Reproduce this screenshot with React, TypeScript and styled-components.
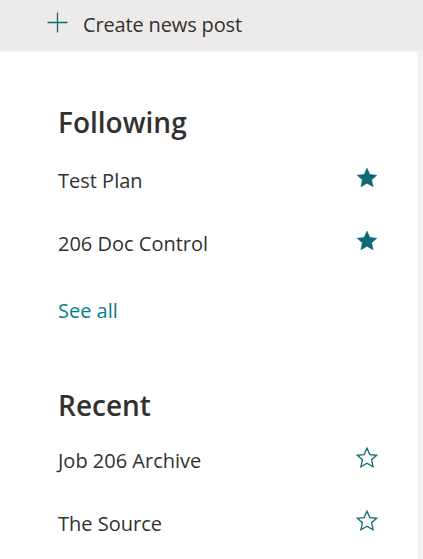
import styled, { createGlobalStyle } from 'styled-components';

const GlobalStyle = createGlobalStyle`
  html, body {
    margin: 0;
    padding: 0;
    background: #ffffff;
  }
  body {
    font-family: "Open Sans", "Noto Sans", sans-serif;
    color: #323130;
  }
`;

type Site = { name: string; followed: boolean };

const following: Site[] = [
  { name: 'Test Plan', followed: true },
  { name: '206 Doc Control', followed: true },
];

const recent: Site[] = [
  { name: 'Job 206 Archive', followed: false },
  { name: 'The Source', followed: false },
];

function Star({ filled }: { filled: boolean }) {
  return (
    <svg width="24" height="24" viewBox="0 0 24 24">
      <path
        d="M12 2.2l2.85 6.35 6.9.7-5.17 4.6 1.5 6.85L12 17.2l-6.08 3.5 1.5-6.85L2.25 9.25l6.9-.7z"
        fill={filled ? '#0b6a76' : 'none'}
        stroke="#0b6a76"
        strokeWidth={filled ? 0.6 : 1.3}
        strokeLinejoin="miter"
      />
    </svg>
  );
}

function SiteRow({ site }: { site: Site }) {
  return (
    <Row>
      <RowLabel>{site.name}</RowLabel>
      <StarButton>
        <Star filled={site.followed} />
      </StarButton>
    </Row>
  );
}

function App() {
  return (
    <Page>
      <GlobalStyle />
      <Toolbar>
        <PlusIcon width="21" height="21" viewBox="0 0 21 21">
          <path d="M10.5 0.5v20M0.5 10.5h20" stroke="#0b6a76" strokeWidth="1.3" fill="none" />
        </PlusIcon>
        <ToolbarLabel>Create news post</ToolbarLabel>
      </Toolbar>
      <Body>
        <Panel>
          <Section $top={52}>
            <Heading $gap={8}>Following</Heading>
            {following.map((s) => (
              <SiteRow key={s.name} site={s} />
            ))}
            <SeeAll>See all</SeeAll>
          </Section>
          <Section $top={62}>
            <Heading $gap={5}>Recent</Heading>
            {recent.map((s) => (
              <SiteRow key={s.name} site={s} />
            ))}
          </Section>
        </Panel>
        <ScrollTrack />
      </Body>
    </Page>
  );
}

const Page = styled.div`
  display: flex;
  flex-direction: column;
  width: 423px;
  height: 559px;
  overflow: hidden;
`;

const Toolbar = styled.div`
  display: flex;
  align-items: center;
  height: 50px;
  padding-left: 47px;
  background: #edebe9;
  border-bottom: 2px solid #f3f2f1;
  flex-shrink: 0;
`;

const PlusIcon = styled.svg`
  margin-top: -6px;
`;

const ToolbarLabel = styled.span`
  margin-left: 15px;
  font-size: 20px;
  line-height: 28px;
  letter-spacing: -0.15px;
  color: #323130;
`;

const Body = styled.div`
  display: flex;
  flex: 1;
  min-height: 0;
`;

const Panel = styled.div`
  flex: 1;
  padding: 0 38px 0 58px;
  background: #ffffff;
`;

const ScrollTrack = styled.div`
  width: 5px;
  background: #f3f2f1;
  border-left: 1px solid #fafafa;
`;

const Section = styled.section<{ $top: number }>`
  display: flex;
  flex-direction: column;
  margin-top: ${(p) => p.$top}px;
`;

const Heading = styled.h2<{ $gap: number }>`
  margin: 0 0 ${(p) => p.$gap}px;
  font-size: 28px;
  line-height: 36px;
  font-weight: 600;
  color: #323130;
`;

const Row = styled.div`
  display: flex;
  align-items: center;
  justify-content: space-between;
  height: 63px;
`;

const RowLabel = styled.span`
  font-size: 20px;
  line-height: 28px;
  padding-top: 2px;
  color: #323130;
`;

const StarButton = styled.span`
  display: flex;
  margin-top: -3px;
`;

const SeeAll = styled.a`
  margin-top: 23px;
  font-size: 20px;
  line-height: 28px;
  color: #038387;
  cursor: pointer;
`;

export default App;
